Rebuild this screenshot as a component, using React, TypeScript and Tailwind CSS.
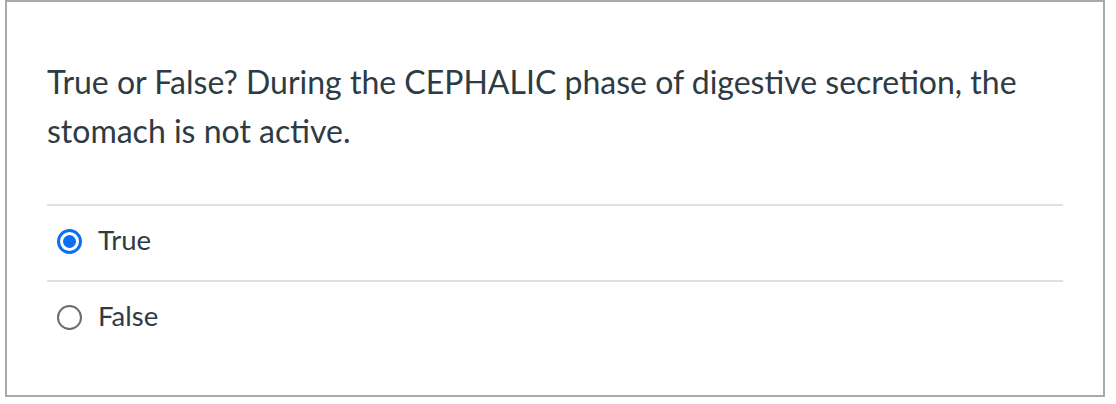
import { useState } from "react";

const options = ["True", "False"];

export default function App() {
  const [selected, setSelected] = useState("True");

  return (
    <div className="w-[1116px] h-[404px] bg-white font-['Lato','Noto_Sans',sans-serif] text-[#2d3b45]">
      <div className="ml-[5px] w-[1100px] h-[397px] border-2 border-[#a9a9a9] px-10 pt-[55px]">
        {/* 問題文 */}
        <p className="text-[32px] leading-[49px]">
          True or False? During the CEPHALIC phase of digestive secretion, the
          stomach is not active.
        </p>

        {/* 選択肢 */}
        <div className="mt-[49px]">
          {options.map((opt) => (
            <label
              key={opt}
              className="flex items-center h-[76px] pb-[4px] border-t-2 border-[#e0e0e0] cursor-pointer"
            >
              <input
                type="radio"
                name="answer"
                className="sr-only"
                checked={selected === opt}
                onChange={() => setSelected(opt)}
              />
              {selected === opt ? (
                <span className="ml-[10px] w-[25px] h-[25px] rounded-full border-[3px] border-[#0b6ff5] flex items-center justify-center">
                  <span className="w-[13px] h-[13px] rounded-full bg-[#0b6ff5]" />
                </span>
              ) : (
                <span className="ml-[10px] w-[25px] h-[25px] rounded-full border-2 border-[#6b6b6b]" />
              )}
              <span className="ml-[16px] text-[27.5px] leading-none pb-[3px]">{opt}</span>
            </label>
          ))}
        </div>
      </div>
    </div>
  );
}
